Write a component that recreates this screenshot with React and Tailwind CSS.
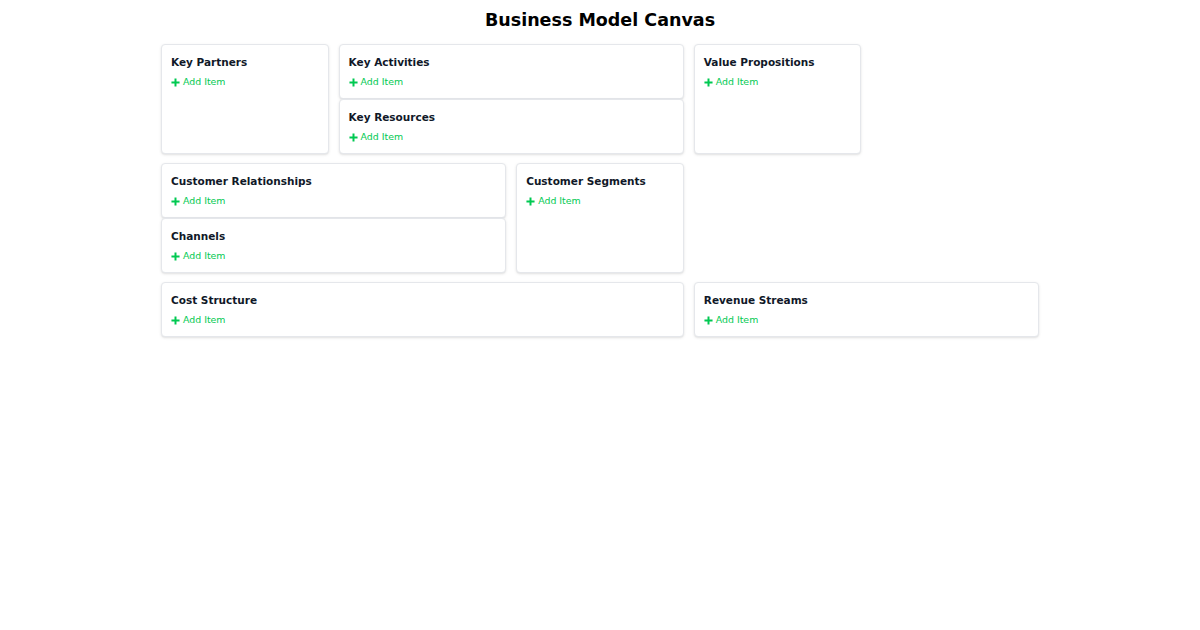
import React from "react";

function AddButton() {
  return (
    <button className="flex items-center gap-[3px] text-[9.4px] leading-[14px] text-green-500">
      <svg width="9" height="9" viewBox="0 0 10 10" className="shrink-0">
        <path d="M5 0.5v9M0.5 5h9" stroke="currentColor" strokeWidth="2.2" />
      </svg>
      Add Item
    </button>
  );
}

function Card({ title, className = "" }) {
  return (
    <div className={`bg-white border border-gray-200 rounded shadow-sm px-[9px] pt-[9px] pb-2.5 ${className}`}>
      <h2 className="text-[10.5px] leading-4 font-bold text-gray-900 mb-[5px]">{title}</h2>
      <AddButton />
    </div>
  );
}

export default function App() {
  return (
    <div className="min-h-screen bg-white" style={{ fontFamily: '"DejaVu Sans", sans-serif' }}>
      <h1 className="text-[17.5px] leading-6 font-bold text-center text-black pt-2 pb-3">Business Model Canvas</h1>

      <div className="w-[878px] mx-auto grid grid-cols-5 gap-x-2.5 gap-y-[9px]">
        {/* Fila 1 */}
        <Card title="Key Partners" className="h-[110px]" />
        <div className="col-span-2 flex flex-col">
          <Card title="Key Activities" className="h-[55px]" />
          <Card title="Key Resources" className="h-[55px]" />
        </div>
        <Card title="Value Propositions" className="h-[110px]" />
        <div />

        {/* Fila 2 */}
        <div className="col-span-2 flex flex-col">
          <Card title="Customer Relationships" className="h-[55px]" />
          <Card title="Channels" className="h-[55px]" />
        </div>
        <Card title="Customer Segments" className="h-[110px]" />
        <div className="col-span-2" />

        {/* Fila 3 */}
        <Card title="Cost Structure" className="col-span-3 h-[55px]" />
        <Card title="Revenue Streams" className="col-span-2 h-[55px]" />
      </div>
    </div>
  );
}
